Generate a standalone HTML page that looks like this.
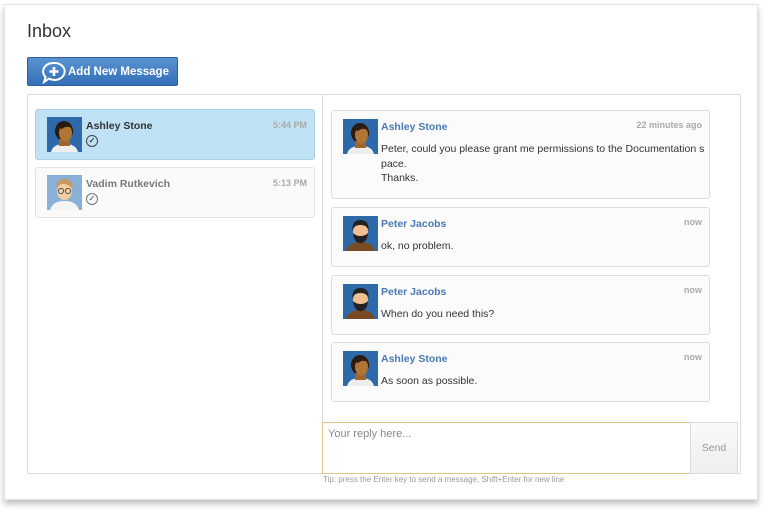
<!DOCTYPE html>
<html><head><style>
*{box-sizing:border-box;margin:0;padding:0}
body{width:768px;height:522px;background:#fff;font-family:"Liberation Sans",sans-serif;position:relative;overflow:hidden}
.card{position:absolute;left:4px;top:4px;width:754px;height:496px;background:#fff;border:1px solid #e4e4e4;box-shadow:0 4px 6px rgba(0,0,0,.25)}
.abs{position:absolute}
h1{position:absolute;left:27px;top:21px;font-size:18px;font-weight:normal;color:#333}
.btn{left:27px;top:57px;width:151px;height:29px;background:linear-gradient(#5a93d2,#336fb6);border:1px solid #2d5f9c;border-radius:2px;color:#fff;font-weight:bold;font-size:11.5px}
.panel{left:27px;top:94px;width:714px;height:380px;border:1px solid #ddd}
.div{left:322px;top:94px;width:1px;height:328px;background:#ddd}
.conv{left:35px;width:280px;height:51px;border:1px solid #e2e2e2;border-radius:3px;background:#fafafa}
.conv.sel{background:#bfe2f5;border-color:#a8d0e8}
.av{position:absolute;width:35px;height:35px}
.cn{position:absolute;left:50px;top:10px;font-size:10.5px;font-weight:bold;color:#333}
.ct{position:absolute;right:7px;top:10px;font-size:9px;font-weight:bold;color:#aaa}
.chk{position:absolute;left:50px;top:25px;width:12px;height:12px;border:1.5px solid #444;border-radius:50%;font-size:8px;line-height:9px;text-align:center;color:#444;font-weight:bold}
.msg{left:331px;width:379px;border:1px solid #ddd;border-radius:3px;background:#fbfbfb}
.mn{position:absolute;left:49px;top:10px;font-size:10.5px;font-weight:bold;color:#4a79b5}
.mt{position:absolute;right:7px;top:9px;font-size:9px;font-weight:bold;color:#aaa}
.mb{position:absolute;left:49px;top:31px;font-size:10.5px;color:#333;line-height:14.5px;width:325px;word-break:break-all}
</style></head><body>
<div class="card"></div>
<h1>Inbox</h1>
<div class="abs btn"><svg class="abs" style="left:13px;top:3px" width="26" height="23" viewBox="0 0 26 23"><path d="M13 2a10 8.5 0 1 1-5 15.5L3 21l1.5-5A10 8.5 0 0 1 13 2z" fill="none" stroke="#fff" stroke-width="2"/><path d="M13 6v9M8.5 10.5h9" stroke="#fff" stroke-width="2.6"/></svg><span class="abs" style="left:40px;top:8px">Add New Message</span></div>
<div class="abs panel"></div>
<div class="abs div"></div>
<svg width="0" height="0" style="position:absolute"><defs>
<g id="ash"><rect width="35" height="35" fill="#2e6aa9"/><path d="M4 35c2-7 8-8 13.5-8s11.5 1 13.5 8z" fill="#eee"/><ellipse cx="17" cy="14" rx="9" ry="10" fill="#2a1a10"/><path d="M12 22h11v7h-11z" fill="#a0652a"/><ellipse cx="18.5" cy="16" rx="6.5" ry="8.5" fill="#b07535"/><path d="M10 10q7-8 15 1q-6-3-10 1z" fill="#2a1a10"/></g>
<g id="pet"><rect width="35" height="35" fill="#2e6aa9"/><path d="M3 35c2-7 8-9 14.5-9s12.5 2 14.5 9z" fill="#7a4a25"/><ellipse cx="17.5" cy="16" rx="7.5" ry="9" fill="#f0c090"/><path d="M10 17q1 10 7.5 10t7.5-10q-3 3-7.5 3t-7.5-3z" fill="#222"/><path d="M9.5 15q-1-11 8-11t8 11q-1-6-8-6t-8 6z" fill="#222"/></g>
<g id="vad"><rect width="35" height="35" fill="#8ab0d8"/><path d="M3 35c2-7 8-9 14.5-9s12.5 2 14.5 9z" fill="#f4f4f4"/><ellipse cx="17.5" cy="16" rx="7.5" ry="9" fill="#f2cfa2"/><path d="M9.5 15q-1-11 8-11t8 11q-2-5-8-6t-8 6z" fill="#c89a60"/><circle cx="14" cy="16" r="2.6" fill="none" stroke="#555"/><circle cx="21" cy="16" r="2.6" fill="none" stroke="#555"/></g>
</defs></svg>
<div class="abs conv sel" style="top:109px"><svg class="av" style="left:11px;top:7px" viewBox="0 0 35 35"><use href="#ash"/></svg><div class="cn">Ashley Stone</div><div class="ct">5:44 PM</div><div class="chk">✓</div></div>
<div class="abs conv" style="top:167px"><svg class="av" style="left:11px;top:7px" viewBox="0 0 35 35"><use href="#vad"/></svg><div class="cn" style="color:#777">Vadim Rutkevich</div><div class="ct">5:13 PM</div><div class="chk" style="border-color:#777;color:#777">✓</div></div>

<div class="abs msg" style="top:110px;height:89px"><svg class="av" style="left:11px;top:8px" viewBox="0 0 35 35"><use href="#ash"/></svg><div class="mn">Ashley Stone</div><div class="mt">22 minutes ago</div><div class="mb">Peter, could you please grant me permissions to the Documentation space.<br>Thanks.</div></div>
<div class="abs msg" style="top:207px;height:60px"><svg class="av" style="left:11px;top:8px" viewBox="0 0 35 35"><use href="#pet"/></svg><div class="mn">Peter Jacobs</div><div class="mt">now</div><div class="mb">ok, no problem.</div></div>
<div class="abs msg" style="top:275px;height:60px"><svg class="av" style="left:11px;top:8px" viewBox="0 0 35 35"><use href="#pet"/></svg><div class="mn">Peter Jacobs</div><div class="mt">now</div><div class="mb">When do you need this?</div></div>
<div class="abs msg" style="top:342px;height:60px"><svg class="av" style="left:11px;top:8px" viewBox="0 0 35 35"><use href="#ash"/></svg><div class="mn">Ashley Stone</div><div class="mt">now</div><div class="mb">As soon as possible.</div></div>

<div class="abs" style="left:322px;top:422px;width:369px;height:52px;border:1.5px solid #e3c27e;background:#fff;font-size:11px;color:#888;padding:5px 5px">Your reply here...</div>
<div class="abs" style="left:690px;top:422px;width:48px;height:52px;border:1px solid #ddd;background:linear-gradient(#fafafa,#eee);font-size:10.5px;color:#999;text-align:center;line-height:50px">Send</div>
<div class="abs" style="left:323px;top:475px;font-size:8px;color:#999">Tip: press the Enter key to send a message, Shift+Enter for new line</div>
</body></html>
